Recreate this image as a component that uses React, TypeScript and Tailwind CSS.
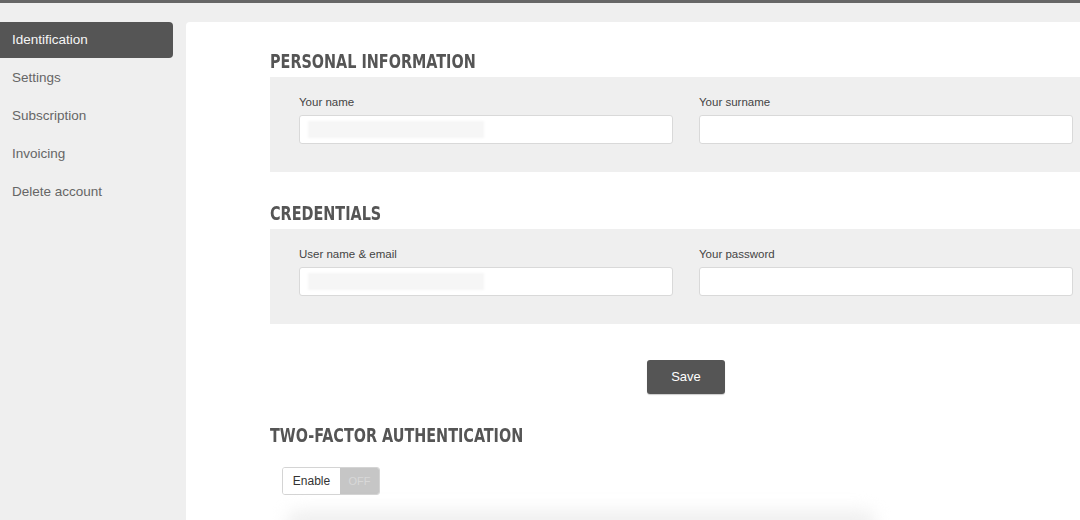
import React from "react";

const sans = "font-['Liberation_Sans',Arial,sans-serif]";
const heading =
  "font-['DejaVu_Sans_Condensed','Liberation_Sans_Narrow',sans-serif] font-bold text-[20px] leading-none text-[#555] scale-x-[0.8] origin-left whitespace-nowrap";

const navItems = ["Identification", "Settings", "Subscription", "Invoicing", "Delete account"];

function Field({ label, filled }: { label: string; filled?: boolean }) {
  return (
    <div className="flex flex-col w-[374px]">
      <label className="text-[11.5px] leading-[14px] text-[#444] mb-[6px]">{label}</label>
      <div className="relative h-[29px] bg-white border border-[#d9d9d9] rounded-[3px]">
        {filled && <div className="absolute left-[8px] top-[5px] w-[176px] h-[17px] bg-[#f6f6f6] blur-[1px]" />}
      </div>
    </div>
  );
}

function Section({ title, fields }: { title: string; fields: [string, string] }) {
  return (
    <div>
      <h2 className={`${heading} h-[20px] flex items-center`}>{title}</h2>
      <div className="mt-[6px] w-[832px] h-[95px] bg-[#efefef] pl-[29px] pt-[18px] flex gap-[26px]">
        <Field label={fields[0]} filled />
        <Field label={fields[1]} />
      </div>
    </div>
  );
}

export default function App() {
  return (
    <div className={`${sans} w-[1080px] h-[520px] overflow-hidden bg-[#efefef] flex flex-col`}>
      <div className="h-[3px] bg-[#666] shrink-0" />
      <div className="flex flex-1 pt-[19px] min-h-0">
        {/* Sidebar */}
        <aside className="w-[186px] shrink-0 flex flex-col">
          {navItems.map((item, i) => (
            <div
              key={item}
              className={
                i === 0
                  ? "w-[173px] h-[36px] bg-[#555] rounded-r-[4px] text-[#f5f5f5] text-[13.5px] pl-[12px] flex items-center"
                  : "h-[38px] text-[13.5px] text-[#666] pl-[12px] flex items-center [&:nth-child(2)]:mt-[1px]"
              }
            >
              {item}
            </div>
          ))}
        </aside>

        {/* Main panel */}
        <main className="relative flex-1 bg-white rounded-tl-[4px] overflow-hidden pl-[84px] pt-[29px]">
          <Section title="PERSONAL INFORMATION" fields={["Your name", "Your surname"]} />
          <div className="mt-[31px]">
            <Section title="CREDENTIALS" fields={["User name & email", "Your password"]} />
          </div>

          <div className="w-[832px] flex justify-center mt-[36px]">
            <button className="w-[78px] h-[34px] bg-[#555] text-white text-[13px] rounded-[3px] shadow-[0_1px_1px_rgba(0,0,0,0.2)]">
              Save
            </button>
          </div>

          <h2 className={`${heading} h-[20px] flex items-center mt-[31px]`}>TWO-FACTOR AUTHENTICATION</h2>

          <div className="mt-[22px] ml-[12px] flex w-[98px] h-[28px] rounded-[3px] overflow-hidden border border-[#d4d4d4]">
            <div className="w-[57px] bg-white text-[12px] text-[#333] flex items-center justify-center">Enable</div>
            <div className="flex-1 bg-[#c6c6c6] text-[11px] text-[#d8d8d8] flex items-center justify-center">OFF</div>
          </div>

          <div className="absolute left-[100px] bottom-[-16px] w-[590px] h-[26px] bg-[#f0f0f0] blur-[8px] rounded-full" />
        </main>
      </div>
    </div>
  );
}
